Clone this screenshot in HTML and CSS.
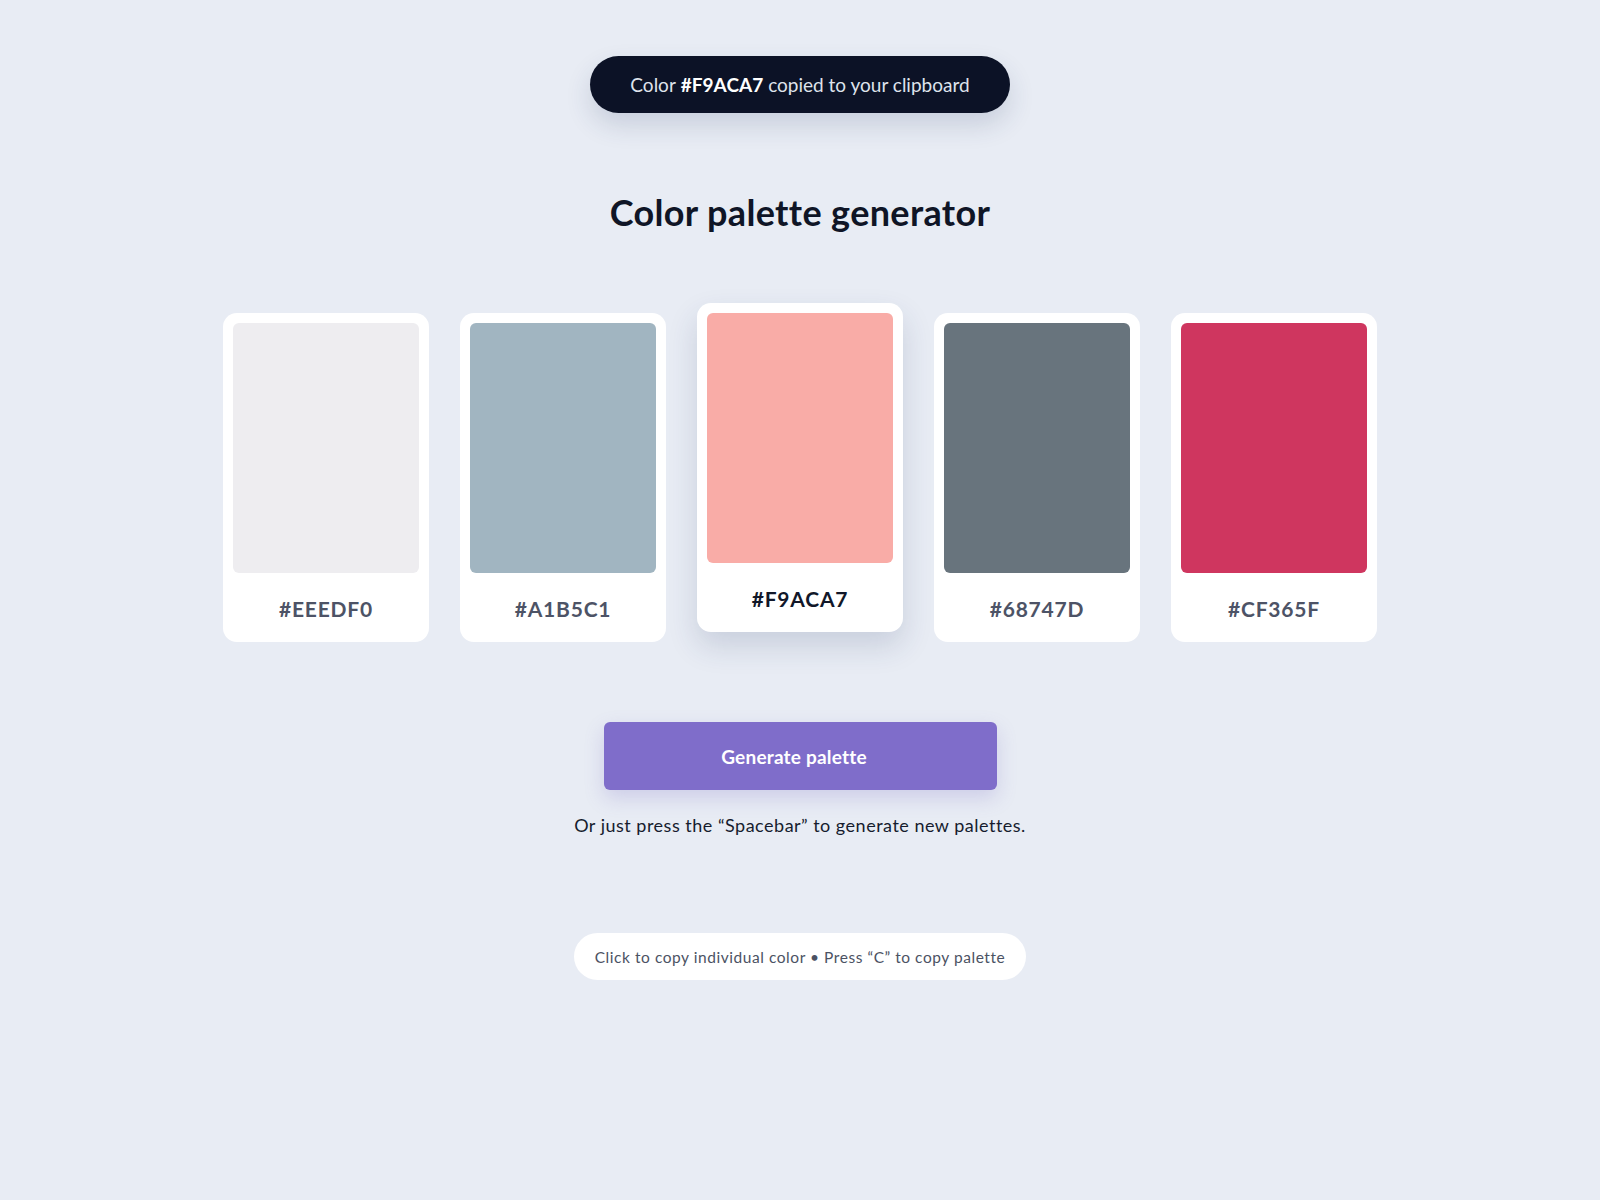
FILE: index.html
```html
<!DOCTYPE html>
<html>
<head>
	<title>Color palette generator</title>
	<link rel="stylesheet" href="styles.css">
</head>
<body>

	<div class="page">

		<div class="toast">Color <b>#F9ACA7</b> copied to your clipboard</div>

		<h1 class="title">Color palette generator</h1>

		<div class="palette">
			<div class="card">
				<div class="swatch" style="background-color: #EEEDF0;"></div>
				<div class="hex">#EEEDF0</div>
			</div>
			<div class="card">
				<div class="swatch" style="background-color: #A1B5C1;"></div>
				<div class="hex">#A1B5C1</div>
			</div>
			<div class="card active">
				<div class="swatch" style="background-color: #F9ACA7;"></div>
				<div class="hex">#F9ACA7</div>
			</div>
			<div class="card">
				<div class="swatch" style="background-color: #68747D;"></div>
				<div class="hex">#68747D</div>
			</div>
			<div class="card">
				<div class="swatch" style="background-color: #CF365F;"></div>
				<div class="hex">#CF365F</div>
			</div>
		</div>

		<button type="button" class="generate">Generate palette</button>

		<p class="hint">Or just press the &ldquo;Spacebar&rdquo; to generate new palettes.</p>

		<div class="tip">Click to copy individual color &bull; Press &ldquo;C&rdquo; to copy palette</div>

	</div>

</body>
</html>
```

FILE: styles.css
```css
body {
	margin: 0;
	background-color: #e8ecf4;
	font-family: Lato, "Noto Sans", sans-serif;
	color: #111827;
}

.page {
	display: flex;
	flex-direction: column;
	align-items: center;
	padding-top: 56px;
	padding-bottom: 100px;
}

.toast {
	width: 420px;
	height: 57px;
	box-sizing: border-box;
	display: flex;
	align-items: center;
	justify-content: center;
	border-radius: 29px;
	background-color: #0c1226;
	color: #dfe3ec;
	font-size: 19px;
	box-shadow: 0 12px 26px rgba(40, 55, 100, 0.16);
}

.toast b {
	color: #ffffff;
	font-weight: 700;
	margin: 0 5px;
}

.title {
	margin: 77px 0 0;
	font-size: 36px;
	line-height: 44px;
	font-weight: 700;
	letter-spacing: 0.35px;
	color: #0f1526;
}

.palette {
	display: flex;
	gap: 31px;
	margin-top: 79px;
}

.card {
	width: 206px;
	box-sizing: border-box;
	padding: 10px 10px 0;
	background-color: #ffffff;
	border-radius: 14px;
	cursor: pointer;
}

.card.active {
	transform: translateY(-10px);
	box-shadow: 0 14px 30px rgba(40, 55, 100, 0.16);
}

.swatch {
	height: 250px;
	border-radius: 6px;
}

.hex {
	height: 69px;
	display: flex;
	align-items: center;
	justify-content: center;
	padding-top: 1px;
	box-sizing: border-box;
	font-size: 21px;
	font-weight: 700;
	letter-spacing: 0.8px;
	color: #4d5366;
}

.card.active .hex {
	color: #111729;
}

.generate {
	margin-top: 80px;
	width: 393px;
	height: 68px;
	border: none;
	border-radius: 6px;
	padding: 0 12px 0 0;
	background-color: #7f6dca;
	color: #ffffff;
	font-family: inherit;
	font-size: 19px;
	font-weight: 700;
	letter-spacing: 0.2px;
	cursor: pointer;
	box-shadow: 0 8px 20px rgba(110, 95, 190, 0.22);
}

.hint {
	margin: 22px 0 0;
	font-size: 18px;
	line-height: 26px;
	letter-spacing: 0.5px;
	color: #161c2e;
}

.tip {
	margin-top: 95px;
	height: 47px;
	box-sizing: border-box;
	padding: 0 21px;
	display: flex;
	align-items: center;
	border-radius: 24px;
	background-color: #ffffff;
	font-size: 15.5px;
	letter-spacing: 0.55px;
	color: #4b5263;
}
```
